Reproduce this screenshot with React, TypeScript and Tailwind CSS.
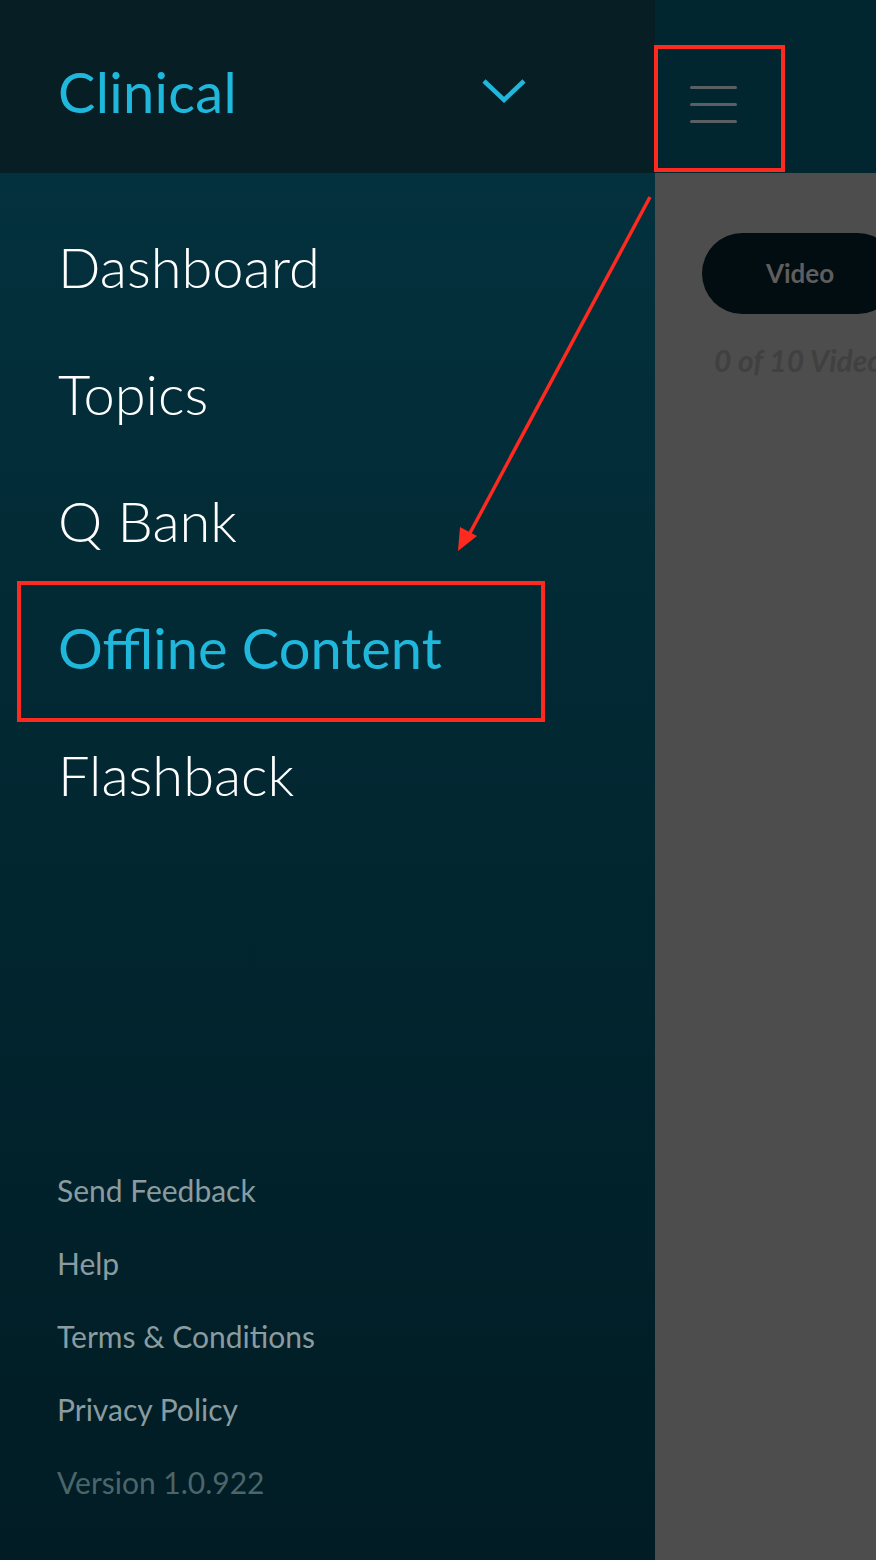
const mainLinks = [
  { name: "Dashboard", active: false },
  { name: "Topics", active: false },
  { name: "Q Bank", active: false },
  { name: "Offline Content", active: true },
  { name: "Flashback", active: false },
];

const footerLinks = ["Send Feedback", "Help", "Terms & Conditions", "Privacy Policy"];

const App = () => {
  return (
    <div className="relative flex w-[876px] h-[1560px] overflow-hidden font-['Lato','Noto_Sans',sans-serif]">
      {/* Drawer */}
      <aside className="flex flex-col w-[655px] h-full shrink-0">
        <div className="flex items-center justify-between h-[173px] pt-[10px] pl-[58px] pr-[128px] bg-[#081e25]">
          <span className="text-[56px] tracking-[0.3px] text-[#1fb8dc]">Clinical</span>
          <svg width="46" height="26" viewBox="0 0 46 26" className="mt-[-2px]">
            <path d="M3 3 L23 22 L43 3" fill="none" stroke="#1fb8dc" strokeWidth="4.5" strokeLinecap="butt" strokeLinejoin="miter" />
          </svg>
        </div>

        <div className="flex flex-col flex-1 bg-gradient-to-b from-[#03313d] to-[#011c24]">
          <nav className="flex flex-col pt-[30px] pl-[58px]">
            {mainLinks.map((link) => (
              <a
                key={link.name}
                className={
                  link.active
                    ? "text-[56px] leading-[127px] text-[#1fb8dc] font-normal"
                    : "text-[56px] leading-[127px] text-white font-light"
                }
              >
                {link.name}
              </a>
            ))}
          </nav>

          <div className="flex flex-col mt-auto pb-[41px] pl-[57px]">
            {footerLinks.map((item) => (
              <a key={item} className="text-[30px] leading-[73px] text-[#8a9ca0]">
                {item}
              </a>
            ))}
            <span className="text-[30px] leading-[73px] text-[#4b656b]">Version 1.0.922</span>
          </div>
        </div>
      </aside>

      {/* Page behind the drawer, dimmed */}
      <main className="flex flex-col flex-1 h-full overflow-hidden">
        <div className="flex items-center h-[173px] pl-[35px] pt-[36px] bg-[#02262f]">
          <div className="flex flex-col gap-[14px] w-[47px]">
            <span className="block h-[3px] rounded-full bg-[#5a5f61]" />
            <span className="block h-[3px] rounded-full bg-[#5a5f61]" />
            <span className="block h-[3px] rounded-full bg-[#5a5f61]" />
          </div>
        </div>
        <div className="flex-1 bg-[#4d4d4d] pt-[60px] pl-[47px]">
          <div className="flex items-center justify-center w-[196px] h-[81px] rounded-full bg-[#010d11]">
            <span className="text-[26px] font-bold text-[#5e5e5e]">Video</span>
          </div>
          <p className="mt-[24px] ml-[12px] whitespace-nowrap text-[30px] font-bold italic text-[#404040]">
            0 of 10 Videos
          </p>
        </div>
      </main>

      {/* Red callouts drawn over the page */}
      <svg className="absolute inset-0 pointer-events-none" width="876" height="1560" viewBox="0 0 876 1560">
        <rect x="656" y="47" width="127" height="123" fill="none" stroke="#ff2a1f" strokeWidth="4" />
        <rect x="19" y="583" width="524" height="137" fill="none" stroke="#ff2a1f" strokeWidth="4" />
        <line x1="650" y1="197" x2="470" y2="533" stroke="#ff2a1f" strokeWidth="3.5" />
        <polygon points="458,551 460,527 477,536" fill="#ff2a1f" />
      </svg>
    </div>
  );
};

export default App;
